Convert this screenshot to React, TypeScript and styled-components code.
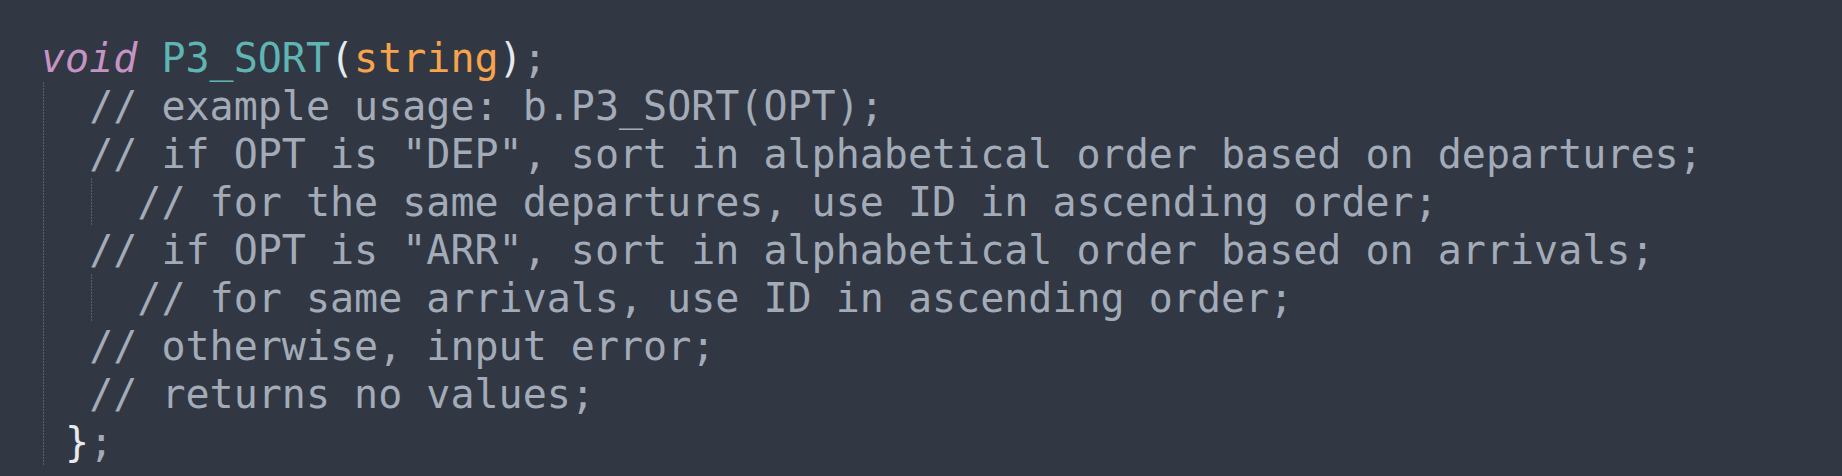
import React from "react";
import styled, { createGlobalStyle } from "styled-components";

const Global = createGlobalStyle`
  html, body {
    margin: 0;
    padding: 0;
    background: #313843;
  }
  body {
    width: 1842px;
    height: 476px;
    overflow: hidden;
  }
`;

const Editor = styled.div`
  box-sizing: border-box;
  width: 1842px;
  height: 476px;
  background: #313843;
  padding: 34px 0 0 41px;
  font-family: "DejaVu Sans Mono", "Liberation Mono", monospace;
  font-size: 40px;
  line-height: 48px;
  color: #a3abb8;
  white-space: pre;
`;

const Line = styled.div`
  display: flex;
  height: 48px;
`;

const Guide = styled.span<{ $cols: number; $show: boolean }>`
  display: inline-block;
  flex: none;
  width: ${(p) => p.$cols}ch;
  height: 100%;
  background-image: ${(p) =>
    p.$show
      ? "linear-gradient(to bottom, #566070 0, #566070 2px, transparent 2px, transparent 3px)"
      : "none"};
  background-size: 1px 3px;
  background-repeat: repeat-y;
  background-position: 2px 0;
`;

const Tok = styled.span<{ $kind: "kw" | "fn" | "type" | "punc" | "comment" | "semi" }>`
  color: ${(p) =>
    ({
      kw: "#c594c5",
      fn: "#5fb4b4",
      type: "#f7a44c",
      punc: "#e6e9ee",
      comment: "#a3abb8",
      semi: "#a3abb8",
    })[p.$kind]};
  font-style: ${(p) => (p.$kind === "kw" ? "italic" : "normal")};
`;

type G = [number, boolean];
const comments: { guides: G[]; text: string }[] = [
  { guides: [[2, true]], text: "// example usage: b.P3_SORT(OPT);" },
  { guides: [[2, true]], text: '// if OPT is "DEP", sort in alphabetical order based on departures;' },
  { guides: [[2, true], [2, true]], text: "// for the same departures, use ID in ascending order;" },
  { guides: [[2, true]], text: '// if OPT is "ARR", sort in alphabetical order based on arrivals;' },
  { guides: [[2, true], [2, true]], text: "// for same arrivals, use ID in ascending order;" },
  { guides: [[2, true]], text: "// otherwise, input error;" },
  { guides: [[2, true]], text: "// returns no values;" },
];

export default function App() {
  return (
    <>
      <Global />
      <Editor>
        <Line>
          <Tok $kind="kw">void</Tok>
          <span> </span>
          <Tok $kind="fn">P3_SORT</Tok>
          <Tok $kind="punc">(</Tok>
          <Tok $kind="type">string</Tok>
          <Tok $kind="punc">)</Tok>
          <Tok $kind="semi">;</Tok>
        </Line>
        {comments.map((c, i) => (
          <Line key={i}>
            {c.guides.map(([cols, show], j) => (
              <Guide key={j} $cols={cols} $show={show} />
            ))}
            <Tok $kind="comment">{c.text}</Tok>
          </Line>
        ))}
        <Line>
          <Guide $cols={1} $show={true} />
          <Tok $kind="punc">{"}"}</Tok>
          <Tok $kind="semi">;</Tok>
        </Line>
      </Editor>
    </>
  );
}
